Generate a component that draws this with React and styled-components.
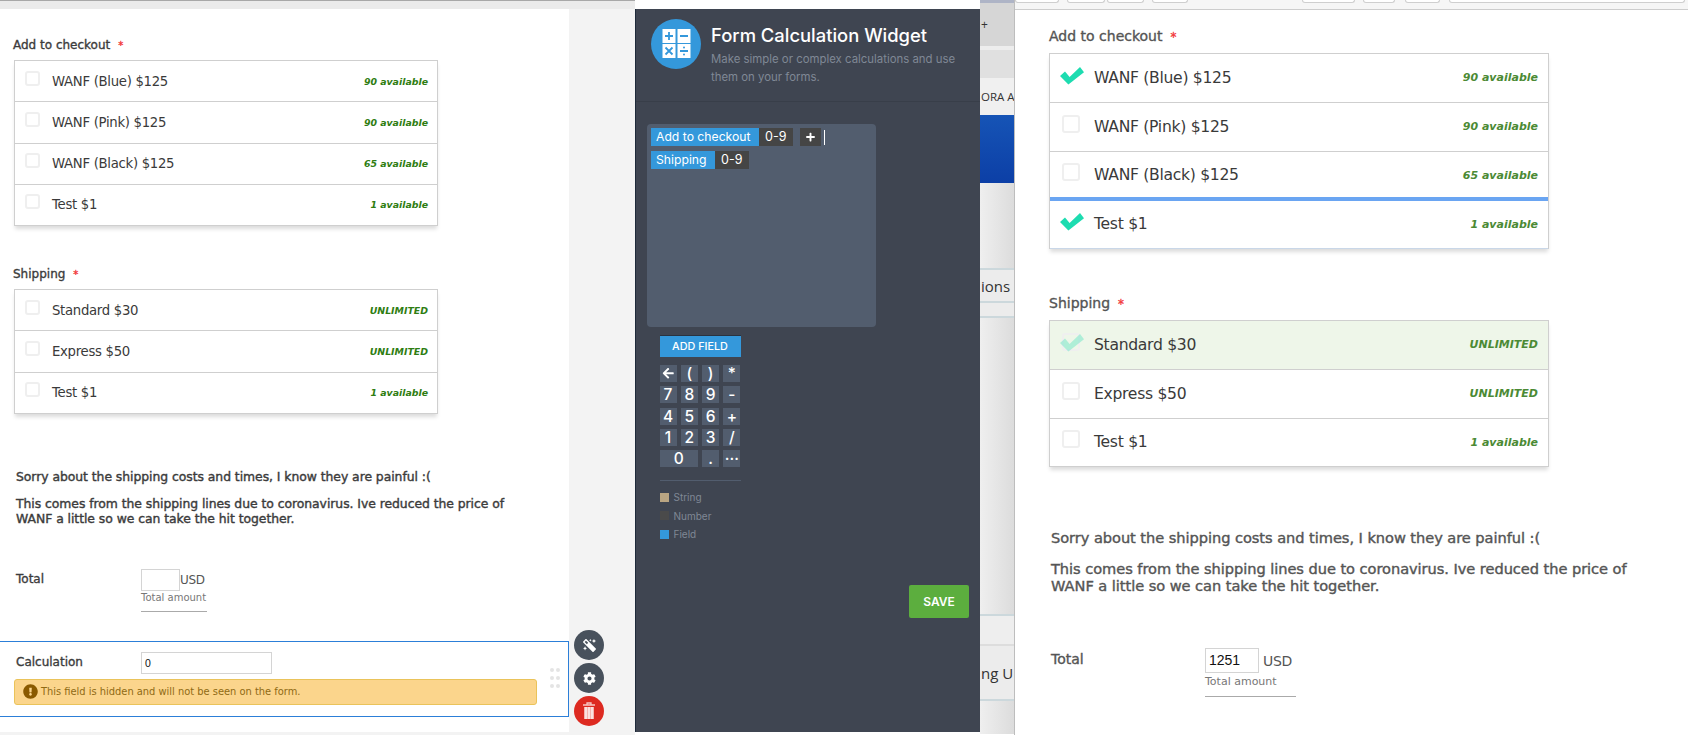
import React from "react";
import styled, { createGlobalStyle, ThemeProvider } from "styled-components";
import { FaMagic, FaCog, FaArrowLeft, FaPlus, FaExclamationCircle } from "react-icons/fa";

const small = {
  label: 12, option: 13.25, avail: 9.4, para: 12.4, sub: 10, input: 10.5,
  labelLine: 16, labelGap: 7, rowH: 41.25, boxH: 15, boxLeft: 10, boxGap: 12,
  availRight: 9, paraLine: 15, paraGap: 12, padLabel: 13, padList: 14, padPara: 16,
  listW: 424, sectionGap: 40, paraTop: 55, totalTop: 43, inputW: 39, inputH: 22, col: 125, lineW: 66, usdGap: 0,
  subTop: 1, lineTop: 7, tickW: 20, tickH: 15, tickLift: 9,
  ink: "#3c3c3c", green: "#2f7d12", paraW: 510,
};
const big = {
  label: 14, option: 15.6, avail: 11, para: 14.6, sub: 11, input: 14,
  labelLine: 18, labelGap: 8, rowH: 48.75, boxH: 18, boxLeft: 12, boxGap: 14,
  availRight: 10, paraLine: 17, paraGap: 14, padLabel: 34, padList: 34, padPara: 36,
  listW: 500, sectionGap: 45, paraTop: 62, totalTop: 54, inputW: 54, inputH: 25, col: 154, lineW: 91, usdGap: 4,
  subTop: 3, lineTop: 8, tickW: 24, tickH: 18, tickLift: 11,
  ink: "#555", green: "#4b8a34", paraW: 590,
};

const GlobalStyle = createGlobalStyle`
  html, body { margin: 0; padding: 0; background: #fff; }
  body { width: 1688px; height: 735px; overflow: hidden; font-family: "DejaVu Sans", sans-serif; }
  * { box-sizing: border-box; }
`;

const Page = styled.div`
  display: flex;
  width: 1688px;
  height: 735px;
  overflow: hidden;
`;

const BuilderPane = styled.div`
  width: 635px;
  display: flex;
  flex-direction: column;
  background: #f3f3f3;
  border-top: 1px solid #a8a8a8;
`;

const TopStrip = styled.div`
  height: 8px;
  background: #ebebeb;
`;

const BuilderBody = styled.div`
  display: flex;
  height: 723px;
`;

const Sheet = styled.div`
  width: 569px;
  background: #fff;
  padding-top: 28px;
`;

const Rail = styled.div`
  flex: 1;
  display: flex;
  flex-direction: column;
  gap: 3px;
  padding: 0 0 6px 5px;
  justify-content: flex-end;
`;

const RoundButton = styled.button`
  width: 30px;
  height: 30px;
  padding: 0;
  border: none;
  border-radius: 50%;
  display: flex;
  align-items: center;
  justify-content: center;
  color: #fff;
  font-size: 13px;
  background: ${(p) => (p.$danger ? "#dd2a21" : "#48515c")};
`;

const WandIcon = styled(FaMagic)`
  transform: scaleX(-1);
`;

const FieldLabel = styled.div`
  font-size: ${(p) => p.theme.label}px;
  line-height: ${(p) => p.theme.labelLine}px;
  -webkit-text-stroke: 0.35px currentColor;
  color: ${(p) => p.theme.ink};
  padding-left: ${(p) => p.theme.padLabel}px;
  margin-top: ${(p) => (p.$next ? p.theme.sectionGap : 0)}px;
  margin-bottom: ${(p) => p.theme.labelGap}px;
`;

const Star = styled.span`
  color: #f23a3c;
  margin-left: 8px;
  font-size: 0.85em;
  line-height: 0;
`;

const OptionList = styled.div`
  width: ${(p) => p.theme.listW}px;
  margin-left: ${(p) => p.theme.padList}px;
  border: 1px solid #cfcfcf;
  border-bottom: none;
  box-shadow: 0 4px 4px -1px rgba(0, 0, 0, 0.14);
`;

const OptionRow = styled.div`
  height: ${(p) => p.theme.rowH}px;
  display: flex;
  align-items: center;
  position: relative;
  padding: 0 ${(p) => p.theme.availRight}px 0 ${(p) => p.theme.boxLeft}px;
  border-bottom: 1px solid ${(p) => (p.$drop ? "#c9d7e8" : "#cfcfcf")};
  background: ${(p) => (p.$active ? "#eef6e9" : "#fff")};
  ${(p) =>
    p.$drop &&
    `&::before {
      content: "";
      position: absolute;
      left: 0;
      right: 0;
      top: -3px;
      height: 4px;
      background: #6aa5f2;
    }`}
`;

const CheckBox = styled.span`
  width: ${(p) => p.theme.boxH}px;
  height: ${(p) => p.theme.boxH}px;
  flex: none;
  border: 2px solid #efefef;
  border-radius: 3px;
  margin-right: ${(p) => p.theme.boxGap}px;
  margin-top: -6px;
  visibility: ${(p) => (p.$hidden ? "hidden" : "visible")};
`;

const Tick = styled.svg`
  position: absolute;
  left: ${(p) => p.theme.boxLeft - 2}px;
  top: 50%;
  margin-top: -${(p) => p.theme.tickLift}px;
  width: ${(p) => p.theme.tickW}px;
  height: ${(p) => p.theme.tickH}px;
  opacity: ${(p) => (p.$faded ? 0.3 : 1)};
`;

const OptionName = styled.span`
  flex: 1;
  font-size: ${(p) => p.theme.option}px;
  color: #3a3a3a;
  letter-spacing: -0.3px;
`;

const Avail = styled.span`
  font-size: ${(p) => p.theme.avail}px;
  font-style: italic;
  font-weight: 700;
  color: ${(p) => p.theme.green};
`;

const Para = styled.p`
  margin: ${(p) => (p.$first ? p.theme.paraTop : p.theme.paraGap)}px 0 0 ${(p) => p.theme.padPara}px;
  width: ${(p) => p.theme.paraW}px;
  font-size: ${(p) => p.theme.para}px;
  line-height: ${(p) => p.theme.paraLine}px;
  letter-spacing: -0.05px;
  -webkit-text-stroke: 0.4px currentColor;
  color: ${(p) => p.theme.ink};
`;

const FieldRow = styled.div`
  display: flex;
  padding-left: ${(p) => p.theme.padPara}px;
  margin-top: ${(p) => (p.$total ? p.theme.totalTop : 0)}px;
`;

const RowLabel = styled.div`
  width: ${(p) => p.theme.col}px;
  flex: none;
  font-size: ${(p) => p.theme.label}px;
  line-height: ${(p) => p.theme.inputH - 2}px;
  -webkit-text-stroke: 0.35px currentColor;
  color: ${(p) => p.theme.ink};
`;

const InputLine = styled.div`
  display: flex;
  align-items: center;
  gap: ${(p) => p.theme.usdGap}px;
`;

const NumberInput = styled.div`
  width: ${(p) => p.$width || p.theme.inputW}px;
  height: ${(p) => p.theme.inputH}px;
  border: 1px solid #d4d4d4;
  background: #fff;
  font-family: "Liberation Sans", sans-serif;
  font-size: ${(p) => p.theme.input}px;
  line-height: ${(p) => p.theme.inputH - 2}px;
  padding-left: 3px;
  color: #111;
`;

const Unit = styled.span`
  font-size: ${(p) => p.theme.label}px;
  letter-spacing: -0.3px;
  color: #555;
`;

const SubLabel = styled.div`
  font-size: ${(p) => p.theme.sub}px;
  line-height: 12px;
  color: #777;
  margin-top: ${(p) => p.theme.subTop}px;
`;

const SubLine = styled.div`
  width: ${(p) => p.theme.lineW}px;
  border-top: 1px solid #aaa;
  margin-top: ${(p) => p.theme.lineTop}px;
`;

const CalcBox = styled.div`
  height: 76px;
  margin-top: 29px;
  border: 1px solid #2c7fd8;
  border-left: none;
  padding-top: 10px;
  position: relative;
`;

const Notice = styled.div`
  width: 523px;
  height: 26px;
  margin: 5px 0 0 14px;
  display: flex;
  align-items: center;
  gap: 3px;
  padding-left: 8px;
  border: 1px solid #eac35a;
  border-radius: 3px;
  background: #fbd58c;
  color: #8f6a14;
  font-size: 9.9px;
  svg { color: #8a5a00; font-size: 15px; }
`;

const DragDots = styled.div`
  position: absolute;
  right: 8px;
  top: 26px;
  display: grid;
  grid-template-columns: 4px 4px;
  gap: 4px 2px;
  span { width: 4px; height: 4px; border-radius: 50%; background: #e4e4e4; }
`;

const WidgetPanel = styled.div`
  width: 345px;
  height: 723px;
  margin-top: 9px;
  background: #3f4551;
  border-left: 1px solid #1e2a3a;
  color: #fff;
  font-family: Inter, sans-serif;
  display: flex;
  flex-direction: column;
`;

const WidgetHead = styled.div`
  height: 93px;
  display: flex;
  gap: 10px;
  padding: 10px 0 0 15px;
  border-bottom: 1px solid #383e49;
`;

const HeadText = styled.div`
  h1 { margin: 4px 0 3px; font-size: 18.4px; line-height: 24px; font-weight: 500; }
  p { margin: 0; width: 265px; font-size: 11.4px; line-height: 18px; color: #7f8895; }
`;

const WidgetBody = styled.div`
  flex: 1;
  padding: 22px 11px 0 11px;
`;

const Editor = styled.div`
  width: 229px;
  height: 203px;
  background: #525d6e;
  border-radius: 4px;
  padding: 4px;
  display: flex;
  flex-direction: column;
  gap: 5px;
`;

const TokenRow = styled.div`
  display: flex;
  align-items: center;
  height: 18px;
`;

const Token = styled.span`
  height: 18px;
  line-height: 18px;
  font-size: ${(p) => (p.$num ? 12.5 : 12.2)}px;
  padding: 0 ${(p) => (p.$num ? 6 : 5)}px;
  margin-left: ${(p) => p.$gap || 0}px;
  background: ${(p) => (p.$num ? "#454545" : "#3498db")};
  width: ${(p) => p.$w}px;
  flex: none;
  display: flex;
  align-items: center;
  justify-content: ${(p) => (p.$center ? "center" : "flex-start")};
  white-space: nowrap;
`;

const Caret = styled.span`
  width: 1px;
  height: 15px;
  margin-left: 3px;
  background: #fff;
`;

const Tools = styled.div`
  width: 81px;
  margin: 8px 0 0 12.5px;
`;

const AddField = styled.button`
  display: block;
  width: 81px;
  height: 22px;
  padding: 0;
  border: none;
  border-top: 1px solid #2a3340;
  background: #3498db;
  color: #fff;
  font-family: Inter, sans-serif;
  font-size: 10.8px;
  font-weight: 500;
`;

const Keypad = styled.div`
  display: grid;
  grid-template-columns: repeat(4, 17px);
  grid-auto-rows: 17px;
  gap: 4.25px 4.3px;
  margin-top: 8px;
`;

const Key = styled.div`
  grid-column: span ${(p) => p.$span || 1};
  background: #525d6e;
  display: flex;
  align-items: center;
  justify-content: center;
  font-size: 15.5px;
  font-weight: 500;
  svg { font-size: 12.5px; }
`;

const ToolRule = styled.div`
  height: 1px;
  background: #525d6e;
  margin: 13px 0 7px;
`;

const LegendRow = styled.div`
  display: flex;
  align-items: center;
  height: 18.5px;
  gap: 5px;
  font-size: 10px;
  color: #7f8895;
`;

const Swatch = styled.span`
  width: 9px;
  height: 9px;
  background: ${(p) => p.$color};
`;

const SaveRow = styled.div`
  display: flex;
  justify-content: flex-end;
  margin-top: 41px;
`;

const SaveButton = styled.button`
  width: 60px;
  height: 33px;
  border: none;
  border-radius: 2px;
  background: #5cae3e;
  color: #fff;
  font-family: Inter, sans-serif;
  font-size: 12px;
  font-weight: 600;
`;

const BehindStrip = styled.div`
  width: 35px;
  height: 735px;
  overflow: hidden;
  border-right: 1px solid #bdbdbd;
  display: flex;
  flex-direction: column;
  font-family: "Open Sans", sans-serif;
  color: #333;
`;

const Band = styled.div`
  height: ${(p) => p.$h}px;
  flex: none;
  background: ${(p) => p.$bg};
  border-bottom: ${(p) => (p.$line ? `2px solid ${p.$line}` : "none")};
  display: flex;
  align-items: center;
  white-space: nowrap;
  font-size: ${(p) => p.$size || 15}px;
  padding-left: 1px;
`;

const PreviewPane = styled.div`
  flex: 1;
  background: #fff;
`;

const Toolbar = styled.div`
  height: 10px;
  display: flex;
  align-items: flex-start;
  background: #f6f6f6;
  border-bottom: 1px solid #cdcdcd;
`;

const ToolButton = styled.div`
  width: ${(p) => p.$w}px;
  margin-left: ${(p) => p.$gap}px;
  height: 3px;
  flex: none;
  background: #fff;
  border: 1px solid #cfcfcf;
  border-top: none;
  border-radius: 0 0 4px 4px;
`;

const PreviewForm = styled.div`
  padding-top: 17px;
`;

const Option = ({ name, avail, checked, faded, active, drop }) => (
  <OptionRow $active={active} $drop={drop}>
    <CheckBox $hidden={checked && !faded} />
    {checked && (
      <Tick viewBox="0 0 24 18" $faded={faded}>
        <path d="M0 9 L5 4.5 L9.6 10 L20 0 L24 5.3 L8.4 17.5 Z" fill="#1ddcb0" />
      </Tick>
    )}
    <OptionName>{name}</OptionName>
    <Avail>{avail}</Avail>
  </OptionRow>
);

const FormFields = ({ checked, total }) => (
  <>
    <FieldLabel>Add to checkout<Star>*</Star></FieldLabel>
    <OptionList>
      <Option name="WANF (Blue) $125" avail="90 available" checked={checked} />
      <Option name="WANF (Pink) $125" avail="90 available" />
      <Option name="WANF (Black) $125" avail="65 available" />
      <Option name="Test $1" avail="1 available" checked={checked} drop={checked} />
    </OptionList>
    <FieldLabel $next>Shipping<Star>*</Star></FieldLabel>
    <OptionList>
      <Option name="Standard $30" avail="UNLIMITED" checked={checked} faded active={checked} />
      <Option name="Express $50" avail="UNLIMITED" />
      <Option name="Test $1" avail="1 available" />
    </OptionList>
    <Para $first>Sorry about the shipping costs and times, I know they are painful :(</Para>
    <Para>This comes from the shipping lines due to coronavirus. Ive reduced the price of WANF a little so we can take the hit together.</Para>
    <FieldRow $total>
      <RowLabel>Total</RowLabel>
      <div>
        <InputLine>
          <NumberInput>{total}</NumberInput>
          <Unit>USD</Unit>
        </InputLine>
        <SubLabel>Total amount</SubLabel>
        <SubLine />
      </div>
    </FieldRow>
  </>
);

const CalcIcon = () => (
  <svg width="50" height="50" viewBox="0 0 50 50" style={{ flex: "none" }}>
    <circle cx="25" cy="25" r="25" fill="#3498db" />
    <g fill="#fff">
      <rect x="11.5" y="10" width="13" height="14" />
      <rect x="26.5" y="10" width="13" height="14" />
      <rect x="11.5" y="25" width="13" height="14" />
      <rect x="26.5" y="25" width="13" height="14" />
    </g>
    <g stroke="#3498db" strokeWidth="1.8" fill="none">
      <path d="M14 17h8M18 13v8M29 17h8M14.5 28.5l7 7M21.5 28.5l-7 7M29 32h8" />
    </g>
    <circle cx="33" cy="28.5" r="1" fill="#3498db" />
    <circle cx="33" cy="35.5" r="1" fill="#3498db" />
  </svg>
);

const TrashIcon = () => (
  <svg width="14" height="18" viewBox="0 0 14 18">
    <path d="M1 3h12M5 3V1h4v2" stroke="#f7c9c5" strokeWidth="1.3" fill="none" />
    <path d="M2 5h10v12H2z" fill="#f4b5b0" />
    <path d="M4 5v12M7 5v12M10 5v12" stroke="#fff" strokeWidth="1.2" />
  </svg>
);

const keys = [
  [<FaArrowLeft key="a" />], ["("], [")"], ["*"],
  ["7"], ["8"], ["9"], ["-"],
  ["4"], ["5"], ["6"], ["+"],
  ["1"], ["2"], ["3"], ["/"],
  ["0", 2], ["."], ["···"],
];

const legend = [
  ["String", "#b9a582"],
  ["Number", "#4a4a4a"],
  ["Field", "#3498db"],
];

// height, background, bottom rule, text, font size of the page showing behind the panel
const bands = [
  [3, "#aeb4c6"],
  [43, "#d6d6d6", null, "+", 12],
  [4, "#ededed"],
  [28, "#e0e0e0"],
  [37, "#f0f0f0", null, "ORA A", 11.5],
  [68, "linear-gradient(#1654b6, #0c3fa6)"],
  [87, "linear-gradient(to right, #efefef, #dcdcdc)", "#ccd8dc"],
  [33, "#ececec", "#ccd8dc", "ions"],
  [15, "#ececec", "#ccd8dc"],
  [298, "linear-gradient(to right, #efefef, #dcdcdc)", "#ccd8dc"],
  [30, "#eeeeee", "#dddddd"],
  [55, "#ececec", "#ccd8dc", "ng U"],
  [33, "linear-gradient(to right, #efefef, #dcdcdc)"],
];

const toolButtons = [
  [44, 0], [38, 8], [37, 2], [36, 8], [53, 114], [32, 8], [35, 10], [236, 9],
];

const App = () => (
  <Page>
    <GlobalStyle />
    <BuilderPane>
      <TopStrip />
      <BuilderBody>
        <ThemeProvider theme={small}>
          <Sheet>
            <FormFields />
            <CalcBox>
              <FieldRow>
                <RowLabel>Calculation</RowLabel>
                <NumberInput $width={131}>0</NumberInput>
              </FieldRow>
              <Notice>
                <FaExclamationCircle />
                This field is hidden and will not be seen on the form.
              </Notice>
              <DragDots>
                {Array.from({ length: 6 }, (_, i) => <span key={i} />)}
              </DragDots>
            </CalcBox>
          </Sheet>
        </ThemeProvider>
        <Rail>
          <RoundButton><WandIcon /></RoundButton>
          <RoundButton><FaCog /></RoundButton>
          <RoundButton $danger><TrashIcon /></RoundButton>
        </Rail>
      </BuilderBody>
    </BuilderPane>

    <WidgetPanel>
      <WidgetHead>
        <CalcIcon />
        <HeadText>
          <h1>Form Calculation Widget</h1>
          <p>Make simple or complex calculations and use them on your forms.</p>
        </HeadText>
      </WidgetHead>
      <WidgetBody>
        <Editor>
          <TokenRow>
            <Token $w={108}>Add to checkout</Token>
            <Token $num $w={34}>0-9</Token>
            <Token $num $gap={7} $w={21} $center><FaPlus size={10} /></Token>
            <Caret />
          </TokenRow>
          <TokenRow>
            <Token $w={64}>Shipping</Token>
            <Token $num $w={34}>0-9</Token>
          </TokenRow>
        </Editor>
        <Tools>
          <AddField>ADD FIELD</AddField>
          <Keypad>
            {keys.map(([k, span], i) => <Key key={i} $span={span}>{k}</Key>)}
          </Keypad>
          <ToolRule />
          {legend.map(([name, color]) => (
            <LegendRow key={name}><Swatch $color={color} />{name}</LegendRow>
          ))}
        </Tools>
        <SaveRow>
          <SaveButton>SAVE</SaveButton>
        </SaveRow>
      </WidgetBody>
    </WidgetPanel>

    <BehindStrip>
      {bands.map(([h, bg, line, text, size], i) => (
        <Band key={i} $h={h} $bg={bg} $line={line} $size={size}>{text}</Band>
      ))}
    </BehindStrip>

    <PreviewPane>
      <Toolbar>
        {toolButtons.map(([w, gap], i) => <ToolButton key={i} $w={w} $gap={gap} />)}
      </Toolbar>
      <ThemeProvider theme={big}>
        <PreviewForm>
          <FormFields checked total="1251" />
        </PreviewForm>
      </ThemeProvider>
    </PreviewPane>
  </Page>
);

export default App;
